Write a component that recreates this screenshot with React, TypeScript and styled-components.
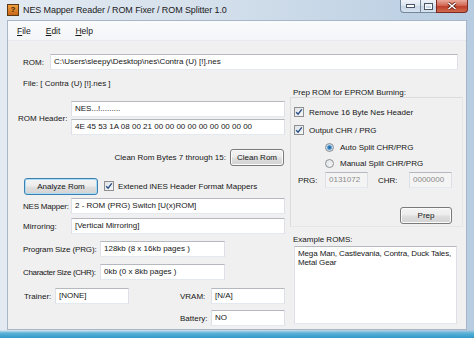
import React from "react";
import styled, { createGlobalStyle } from "styled-components";

const FONT = `"Liberation Sans", Arial, sans-serif`;

const Global = createGlobalStyle`
  html, body { margin: 0; padding: 0; background: #3a8fc0; }
  body { width: 474px; height: 338px; overflow: hidden; }
`;

const Window = styled.div`
  width: 474px;
  height: 338px;
  box-sizing: border-box;
  display: flex;
  flex-direction: column;
  padding: 0 7px 8px 7px;
  background:
    linear-gradient(180deg, rgba(255,255,255,0) 0px, rgba(255,255,255,0) 330px, #5db3d8 333px, #2f97c9 338px),
    linear-gradient(90deg, #e3eaf2 0%, #d6e1ec 40%, #c4d5e6 75%, #b7cce1 100%);
  font-family: ${FONT};
  font-size: 8px;
  color: #161616;
`;

const TitleBar = styled.div`
  height: 20px;
  display: flex;
  align-items: flex-start;
  justify-content: space-between;
`;

const TitleLeft = styled.div`
  display: flex;
  align-items: center;
  gap: 4px;
  height: 20px;
`;

const AppIcon = styled.span`
  width: 10px;
  height: 10px;
  border: 1px solid #5a3a14;
  background: linear-gradient(180deg, #f0a040, #c8661a);
  color: #3a2208;
  font-size: 8px;
  font-weight: bold;
  line-height: 10px;
  text-align: center;
`;

const TitleText = styled.span`
  font-size: 9px;
  color: #1b1b1b;
  letter-spacing: -0.1px;
`;

const Controls = styled.div`
  display: flex;
  height: 13px;
  margin-right: -1px;
`;

const CtrlBtn = styled.div<{ $w: number; $close?: boolean }>`
  width: ${(p) => p.$w}px;
  height: 13px;
  box-sizing: border-box;
  display: flex;
  align-items: center;
  justify-content: center;
  border: 1px solid ${(p) => (p.$close ? "#7a2a20" : "#74869c")};
  border-top: none;
  margin-left: -1px;
  background: ${(p) =>
    p.$close
      ? "linear-gradient(180deg, #e9a99c 0%, #d26a55 45%, #c0402a 55%, #cf6a4e 100%)"
      : "linear-gradient(180deg, #eef2f7 0%, #dde6ef 45%, #c8d6e5 55%, #d7e3ef 100%)"};
  &:first-child { border-bottom-left-radius: 4px; }
  &:last-child { border-bottom-right-radius: 4px; }
`;

const Client = styled.div`
  flex: 1;
  display: flex;
  flex-direction: column;
  border: 1px solid #a8b7c8;
  background: #f0f0f0;
`;

const MenuBar = styled.div`
  height: 19px;
  display: flex;
  align-items: center;
  gap: 15px;
  padding-left: 9px;
  background: linear-gradient(180deg, #fafbfc 0%, #f3f5f8 100%);
  border-bottom: 1px solid #e6e9ee;
`;

const MenuItem = styled.span`
  font-size: 8.5px;
  & u { text-decoration: underline; text-underline-offset: 1px; }
`;

const Content = styled.div`
  flex: 1;
  display: flex;
  flex-direction: column;
`;

const Row = styled.div<{ $mt?: number; $pl?: number; $pr?: number; $end?: boolean }>`
  display: flex;
  align-items: center;
  margin-top: ${(p) => p.$mt ?? 0}px;
  padding-left: ${(p) => p.$pl ?? 0}px;
  padding-right: ${(p) => p.$pr ?? 0}px;
  justify-content: ${(p) => (p.$end ? "flex-end" : "flex-start")};
`;

const Label = styled.span<{ $w?: number; $ml?: number; $ls?: number }>`
  display: inline-block;
  width: ${(p) => (p.$w ? `${p.$w}px` : "auto")};
  margin-left: ${(p) => p.$ml ?? 0}px;
  letter-spacing: ${(p) => p.$ls ?? 0}px;
  white-space: nowrap;
  line-height: 9px;
`;

const TextBox = styled.div<{ $w: number; $disabled?: boolean }>`
  width: ${(p) => p.$w}px;
  height: 16px;
  box-sizing: border-box;
  border: 1px solid;
  border-color: #b5b8bf #dde1e7 #e3e9ef #dde1e7;
  background: ${(p) => (p.$disabled ? "#f4f4f4" : "#ffffff")};
  color: ${(p) => (p.$disabled ? "#8a8a8a" : "#161616")};
  padding: 0 3px;
  line-height: 14px;
  white-space: nowrap;
  overflow: hidden;
`;

const Stack = styled.div`
  display: flex;
  flex-direction: column;
  gap: 2px;
`;

const Button = styled.div<{ $w: number; $focused?: boolean }>`
  width: ${(p) => p.$w}px;
  height: 17px;
  box-sizing: border-box;
  display: flex;
  align-items: center;
  justify-content: center;
  border: 1px solid ${(p) => (p.$focused ? "#3c7fb1" : "#7a7a7a")};
  border-radius: 3px;
  background: linear-gradient(180deg, #f4f4f4 0%, #ececec 48%, #dfdfdf 52%, #d2d2d2 100%);
  box-shadow: inset 0 0 0 1px ${(p) => (p.$focused ? "#a9dcf5" : "#fbfbfb")};
  color: #161616;
`;

const Columns = styled.div`
  display: grid;
  grid-template-columns: 282px 176px;
`;

const Column = styled.div`
  display: flex;
  flex-direction: column;
`;

const Panel = styled.div`
  width: 173px;
  height: 130px;
  box-sizing: border-box;
  border: 1px solid #dcdcdc;
  border-right-color: #e6e6e6;
  border-bottom-color: #e6e6e6;
  display: flex;
  flex-direction: column;
`;

const CheckBox = styled.span`
  width: 10px;
  height: 10px;
  box-sizing: border-box;
  border: 1px solid #8e8f8f;
  background: linear-gradient(135deg, #dfe3e8 0%, #f6f7f8 100%);
  display: inline-flex;
  align-items: center;
  justify-content: center;
  flex: none;
`;

const Radio = styled.span<{ $on?: boolean }>`
  width: 9px;
  height: 9px;
  box-sizing: border-box;
  border-radius: 50%;
  border: 1px solid #8e8f8f;
  background: ${(p) =>
    p.$on
      ? "radial-gradient(circle, #1f5f9e 0%, #3d88c6 35%, #bcd6ea 55%, #eef2f6 100%)"
      : "linear-gradient(135deg, #dfe3e8, #f6f7f8)"};
  flex: none;
`;

const TextArea = styled.div`
  width: 163px;
  height: 78px;
  box-sizing: border-box;
  margin: 2px 0 0 4px;
  border: 1px solid;
  border-color: #b5b8bf #dde1e7 #e3e9ef #dde1e7;
  background: #ffffff;
  padding: 3px 1px 3px 3px;
  letter-spacing: -0.12px;
  line-height: 8.5px;
`;

const Check = () => (
  <CheckBox>
    <svg width="8" height="8" viewBox="0 0 8 8">
      <path d="M1.2 4.2 L3.1 6.2 L6.8 1.4" fill="none" stroke="#2a4f86" strokeWidth="1.4" />
    </svg>
  </CheckBox>
);

export default function App() {
  return (
    <>
      <Global />
      <Window>
        <TitleBar>
          <TitleLeft>
            <AppIcon>?</AppIcon>
            <TitleText>NES Mapper Reader / ROM Fixer / ROM Splitter 1.0</TitleText>
          </TitleLeft>
          <Controls>
            <CtrlBtn $w={21}>
              <svg width="9" height="4" viewBox="0 0 9 4">
                <rect x="0.5" y="0.5" width="8" height="3" fill="#fff" stroke="#4a5668" />
              </svg>
            </CtrlBtn>
            <CtrlBtn $w={17}>
              <svg width="9" height="7" viewBox="0 0 9 7">
                <rect x="0.5" y="0.5" width="8" height="6" fill="none" stroke="#4a5668" />
                <rect x="1.5" y="2" width="6" height="3.5" fill="none" stroke="#fff" />
              </svg>
            </CtrlBtn>
            <CtrlBtn $w={32} $close>
              <svg width="10" height="8" viewBox="0 0 10 8">
                <path d="M1.5 1 L8.5 7 M8.5 1 L1.5 7" stroke="#5a1a10" strokeWidth="3" />
                <path d="M1.5 1 L8.5 7 M8.5 1 L1.5 7" stroke="#ffffff" strokeWidth="1.6" />
              </svg>
            </CtrlBtn>
          </Controls>
        </TitleBar>
        <Client>
          <MenuBar>
            <MenuItem><u>F</u>ile</MenuItem>
            <MenuItem><u>E</u>dit</MenuItem>
            <MenuItem><u>H</u>elp</MenuItem>
          </MenuBar>
          <Content>
            <Row $mt={13} $pl={15}>
              <Label $w={27}>ROM:</Label>
              <TextBox $w={408}>C:\Users\sleepy\Desktop\nes\Contra (U) [!].nes</TextBox>
            </Row>
            <Row $mt={9} $pl={15}>
              <Label>File: [ Contra (U) [!].nes ]</Label>
            </Row>
            <Columns>
              <Column>
                <Row $mt={13} $pl={10}>
                  <Label $w={53}>ROM Header:</Label>
                  <Stack>
                    <TextBox $w={214}>NES...!.........</TextBox>
                    <TextBox $w={214}>4E 45 53 1A 08 00 21 00 00 00 00 00 00 00 00 00</TextBox>
                  </Stack>
                </Row>
                <Row $mt={14} $pr={6} $end>
                  <Label>Clean Rom Bytes 7 through 15:</Label>
                  <Label $ml={4}>
                    <Button $w={54}>Clean Rom</Button>
                  </Label>
                </Row>
                <Row $mt={12} $pl={16}>
                  <Button $w={74} $focused>Analyze Rom</Button>
                  <Label $ml={6}><Check /></Label>
                  <Label $ml={4}>Extened iNES Header Format Mappers</Label>
                </Row>
                <Row $mt={3} $pl={15}>
                  <Label $w={48} $ls={-0.2}>NES Mapper:</Label>
                  <TextBox $w={214}>2 - ROM (PRG) Switch [U(x)ROM]</TextBox>
                </Row>
                <Row $mt={4} $pl={15}>
                  <Label $w={48}>Mirroring:</Label>
                  <TextBox $w={214}>[Vertical Mirroring]</TextBox>
                </Row>
                <Row $mt={7} $pl={15}>
                  <Label $w={77} $ls={-0.1}>Program Size (PRG):</Label>
                  <TextBox $w={125}>128kb (8 x 16kb pages )</TextBox>
                </Row>
                <Row $mt={7} $pl={15}>
                  <Label $w={77} $ls={-0.35}>Character Size (CHR):</Label>
                  <TextBox $w={125}>0kb (0 x 8kb pages )</TextBox>
                </Row>
                <Row $mt={8} $pl={16}>
                  <Label $w={31}>Trainer:</Label>
                  <TextBox $w={74}>[NONE]</TextBox>
                  <Label $w={31} $ml={51}>VRAM:</Label>
                  <TextBox $w={74}>[N/A]</TextBox>
                </Row>
                <Row $mt={6} $pl={172}>
                  <Label $w={31}>Battery:</Label>
                  <TextBox $w={74}>NO</TextBox>
                </Row>
              </Column>
              <Column>
                <Row $pl={3}>
                  <Label>Prep ROM for EPROM Burning:</Label>
                </Row>
                <Panel>
                  <Row $mt={9} $pl={3}>
                    <Check />
                    <Label $ml={5}>Remove 16 Byte Nes Header</Label>
                  </Row>
                  <Row $mt={8} $pl={3}>
                    <Check />
                    <Label $ml={5}>Output CHR / PRG</Label>
                  </Row>
                  <Row $mt={8} $pl={34}>
                    <Radio $on />
                    <Label $ml={6}>Auto Split CHR/PRG</Label>
                  </Row>
                  <Row $mt={7} $pl={34}>
                    <Radio />
                    <Label $ml={6}>Manual Split CHR/PRG</Label>
                  </Row>
                  <Row $mt={4} $pl={7}>
                    <Label $w={27}>PRG:</Label>
                    <TextBox $w={43} $disabled>0131072</TextBox>
                    <Label $w={31} $ml={10}>CHR:</Label>
                    <TextBox $w={43} $disabled>0000000</TextBox>
                  </Row>
                  <Row $mt={19} $pr={10} $end>
                    <Button $w={52}>Prep</Button>
                  </Row>
                </Panel>
                <Row $mt={8} $pl={3}>
                  <Label>Example ROMS:</Label>
                </Row>
                <TextArea>Mega Man, Castlevania, Contra, Duck Tales, Metal Gear</TextArea>
              </Column>
            </Columns>
          </Content>
        </Client>
      </Window>
    </>
  );
}
